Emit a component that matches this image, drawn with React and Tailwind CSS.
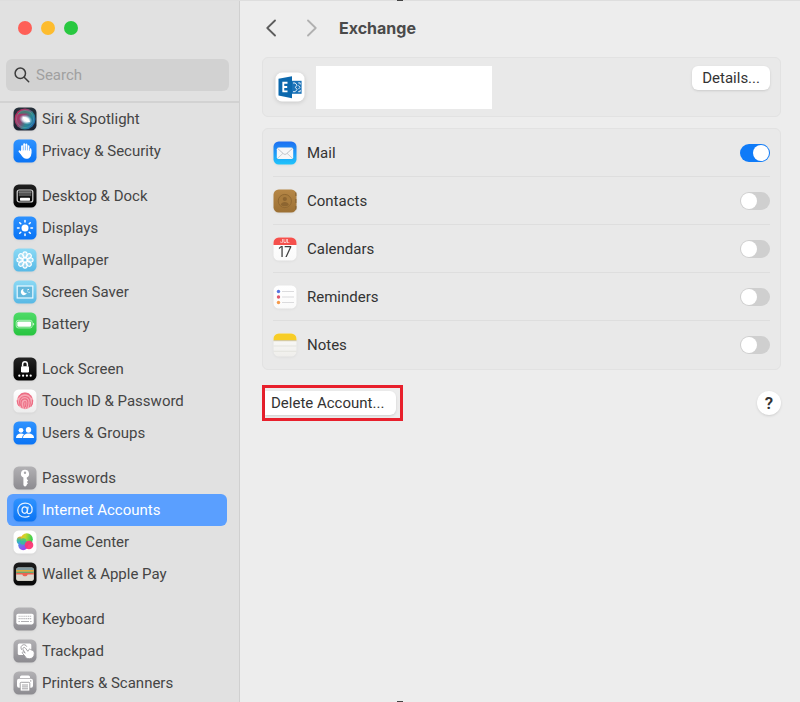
import React, { useId, useState } from 'react';

const Tile = ({ from, to, children }) => {
  const id = useId();
  return (
    <svg viewBox="0 0 24 24" className="size-6 shrink-0 drop-shadow-xs" aria-hidden="true">
      <defs>
        <linearGradient id={id} x1="0" y1="0" x2="0" y2="1">
          <stop offset="0" stopColor={from} />
          <stop offset="1" stopColor={to} />
        </linearGradient>
      </defs>
      <rect x="0.5" y="0.5" width="23" height="23" rx="5.2" fill={`url(#${id})`} />
      {children}
    </svg>
  );
};

const SiriIcon = () => (
  <Tile from="#26303a" to="#1b2433">
    <defs>
      <linearGradient id="siriRing" x1="0" y1="0.2" x2="1" y2="0.8">
        <stop offset="0" stopColor="#d8255f" />
        <stop offset="0.4" stopColor="#a8487a" />
        <stop offset="0.65" stopColor="#2c9aa4" />
        <stop offset="1" stopColor="#1f6cc8" />
      </linearGradient>
      <radialGradient id="siriGlow">
        <stop offset="0" stopColor="#ffffff" />
        <stop offset="0.5" stopColor="#f1f6ff" stopOpacity="0.85" />
        <stop offset="1" stopColor="#8fd3e6" stopOpacity="0" />
      </radialGradient>
    </defs>
    <circle cx="12" cy="12" r="10.500" fill="url(#siriRing)" opacity="0.85" />
    <path d="M4 7.5C8 2 16 2 20 8c-4-1.800-10-2-16-.5z" fill="#2f8f7a" opacity="0.75" />
    <circle cx="12" cy="12" r="8.600" fill="none" stroke="#7cc4b8" strokeWidth="0.6" opacity="0.5" />
    <ellipse cx="12.800" cy="12.600" rx="7" ry="4.800" fill="url(#siriGlow)" transform="rotate(20 12.800 12.600)" />
    <path d="M9.500 9.500c3 .2 7 2.500 7.500 5.500-3.500.5-7-1.500-7.500-5.500z" fill="#fff" />
  </Tile>
);

const HandIcon = () => (
  <Tile from="#2f93ff" to="#0a74f5">
    <g stroke="#fff" strokeWidth="1.9" strokeLinecap="round" fill="none">
      <path d="M9.1 13V7.2M11.2 12V5.2M13.4 12V5.5M15.5 13V7.3" />
      <path d="M8.9 15.2 6.5 12.3M17.4 14v-3.7" />
    </g>
    <path d="M8.1 11h10.2v3.4c0 3.2-1.9 5.3-4.9 5.3-2.3 0-3.6-1-4.8-3.1L7 13.500z" fill="#fff" />
    <path d="M10.15 7.5v4M12.3 6.500v5M14.45 7v4.500M16.5 9v3" stroke="#3a92fb" strokeWidth="0.45" />
  </Tile>
);

const DockIcon = () => (
  <Tile from="#202020" to="#000000">
    <rect x="4.2" y="6" width="15.600" height="12" rx="2" fill="none" stroke="#d8d8d8" strokeWidth="1.200" />
    <rect x="5.8" y="7.600" width="12.400" height="4.500" fill="#555" />
    <path d="M5.500 8h13" stroke="#aaa" strokeWidth="0.800" />
    <rect x="7" y="13.800" width="10" height="2.900" rx="0.600" fill="#fff" />
  </Tile>
);

const DisplaysIcon = () => (
  <Tile from="#2c91ff" to="#0873f5">
    <circle cx="12" cy="12" r="3.500" fill="#fff" />
    <path
      d="M12 4.500v1.600M12 17.900v1.600M4.500 12h1.600M17.900 12h1.600M6.700 6.700l1.100 1.100M16.200 16.200l1.100 1.100M6.700 17.300l1.100-1.100M16.200 7.800l1.100-1.100"
      stroke="#fff"
      strokeWidth="1.500"
      strokeLinecap="round"
    />
  </Tile>
);

const WallpaperIcon = () => (
  <Tile from="#8bdaf5" to="#58b9e6">
    {[0, 45, 90, 135, 180, 225, 270, 315].map((angle) => (
      <ellipse
        key={angle}
        cx="12"
        cy="6.800"
        rx="2.200"
        ry="2.900"
        transform={`rotate(${angle} 12 12)`}
        fill="#fff"
        fillOpacity="0.300"
        stroke="#fff"
        strokeWidth="1.100"
      />
    ))}
    <circle cx="12" cy="12" r="2" fill="#7bcdf0" stroke="#fff" strokeWidth="1" />
  </Tile>
);

const ScreenSaverIcon = () => (
  <Tile from="#8bd9f4" to="#58b8e4">
    <rect x="4.200" y="6" width="15.600" height="12" fill="#64b8dc" stroke="#e8f8ff" strokeWidth="1.200" />
    <path d="M10.500 8.800a3.200 3.200 0 1 0 3.500 4.300 3 3 0 0 1-3.500-4.300z" fill="#fff" />
    <path d="M14.500 9.500h1.500M15.500 12.300h1.200M14.300 11h.8" stroke="#fff" strokeWidth="0.900" />
  </Tile>
);

const BatteryIcon = () => (
  <Tile from="#4edb68" to="#27c43f">
    <rect x="3.200" y="8.300" width="16" height="7.600" rx="2" fill="none" stroke="#b9f3c2" strokeWidth="0.900" />
    <rect x="4.300" y="9.400" width="13.800" height="5.400" rx="1.200" fill="#fff" />
    <path d="M20.300 10.700c1.200.4 1.200 2.400 0 2.800z" fill="#fff" />
  </Tile>
);

const LockIcon = () => (
  <Tile from="#242424" to="#000000">
    <path d="M9.600 9.500V7.300a2.400 2.600 0 0 1 4.800 0v2.200" fill="none" stroke="#fff" strokeWidth="1.500" />
    <rect x="8" y="9.200" width="8" height="6.300" rx="1.200" fill="#fff" />
    <g fill="#fff">
      <circle cx="6.300" cy="18.700" r="1.100" />
      <circle cx="10.100" cy="18.700" r="1.100" />
      <circle cx="13.900" cy="18.700" r="1.100" />
      <circle cx="17.700" cy="18.700" r="1.100" />
    </g>
  </Tile>
);

const TouchIdIcon = () => (
  <Tile from="#ffffff" to="#ededed">
    <circle cx="12" cy="12" r="8.300" fill="#f7a9b5" />
    <g fill="none" stroke="#ec6d84" strokeWidth="1.100" strokeLinecap="round">
      <path d="M5.500 8.300a7.600 7.600 0 0 1 13 0M4.300 11.500c0 2 .3 3.500 1.200 4.800M19.600 11c.2 2.500-.3 4.600-1.500 6.200" />
      <path d="M7 16.500c-1.500-5 .4-9 5-9s6.300 4.500 4.500 10.200M9 18.500c-1.500-3-1.800-8.600 3-8.600 3.800 0 3.300 5.200 1.700 9.200" />
      <path d="M11.500 19c-1-2.500-1.300-6.500.5-6.500 1.700 0 .6 3.500.5 5M8 5.200c2.500-1.500 5.500-1.500 8 0" />
    </g>
  </Tile>
);

const UsersIcon = () => (
  <Tile from="#2f93ff" to="#0a74f5">
    <g fill="#fff">
      <circle cx="8" cy="9.300" r="2.400" />
      <path d="M3 17c0-2.900 2-4.500 5-4.500 1.300 0 2.300.3 3 .8-1.100.9-1.700 2.100-1.800 3.700z" />
      <ellipse cx="15.500" cy="8.800" rx="2.700" ry="2.900" />
      <path d="M10 17c0-3 2.200-4.600 5.500-4.600S21 14 21 17z" />
    </g>
  </Tile>
);

const KeyIcon = () => (
  <Tile from="#b2b1b4" to="#8c8b90">
    <path
      fillRule="evenodd"
      d="M12 3.800a4 4 0 0 1 1.800 7.600v1.500l1.400 1.500-1.400 1.500 1.200 1.400-1.200 1.300v.7L12 20.800l-1.600-1.600v-7.700A4 4 0 0 1 12 3.800zm0 1.800a1.200 1.200 0 1 0 0 2.400 1.200 1.200 0 0 0 0-2.400z"
      fill="#fff"
    />
  </Tile>
);

const AtIcon = () => (
  <Tile from="#2e93ff" to="#0a73f3">
    <g fill="none" stroke="#e5f2ff" strokeWidth="1.250" strokeLinecap="round">
      <ellipse cx="11.700" cy="12.100" rx="2.700" ry="3.200" />
      <path d="M15 9.200l-.7 4.400c-.2 1.500.5 2 1.400 2 1.900 0 3.400-1.700 3.400-4.100 0-3.900-2.900-6.400-6.900-6.400-4.300 0-7.400 3-7.400 7.100 0 4.200 2.900 6.900 7.300 6.900 1.600 0 2.800-.3 3.900-.9" />
    </g>
  </Tile>
);

const GameCenterIcon = () => (
  <Tile from="#ffffff" to="#fdfdfd">
    <defs>
      <linearGradient id="gcTop" x1="0" y1="0" x2="1" y2="0.200">
        <stop offset="0" stopColor="#ffb11c" />
        <stop offset="0.400" stopColor="#c8d92c" />
        <stop offset="1" stopColor="#35cf52" />
      </linearGradient>
      <linearGradient id="gcLeft" x1="0" y1="0" x2="0" y2="1">
        <stop offset="0" stopColor="#f3a52a" />
        <stop offset="0.400" stopColor="#4bbf8e" />
        <stop offset="1" stopColor="#28a4ec" />
      </linearGradient>
      <linearGradient id="gcBottom" x1="0" y1="0" x2="0.600" y2="1">
        <stop offset="0" stopColor="#2fb0e8" />
        <stop offset="1" stopColor="#a33df0" />
      </linearGradient>
    </defs>
    <circle cx="7.700" cy="10.500" r="4" fill="url(#gcLeft)" />
    <circle cx="13.800" cy="9.200" r="6" fill="url(#gcTop)" />
    <circle cx="10.200" cy="15.300" r="4.900" fill="url(#gcBottom)" />
    <circle cx="10.200" cy="11.500" r="3.200" fill="#38c48c" opacity="0.800" />
    <circle cx="16" cy="15" r="4.300" fill="#fc3474" opacity="0.940" />
  </Tile>
);

const WalletIcon = () => (
  <Tile from="#1c1c1c" to="#080808">
    <rect x="3.300" y="5.500" width="17.400" height="13.300" rx="2" fill="#dcd9d0" />
    <path d="M3.300 7.500a2 2 0 0 1 2-2h13.400a2 2 0 0 1 2 2v1H3.300z" fill="#829aa0" />
    <path d="M3.300 8h17.400v1.800H3.300z" fill="#dfac38" />
    <path d="M3.300 9.600h17.400v1.600H3.300z" fill="#6fa769" />
    <path d="M3.300 11h17.400v2H15.500c-.4 1.700-1.800 2.700-3.500 2.700s-3.100-1-3.500-2.700H3.300z" fill="#ec6451" />
    <path d="M3.300 12.400h6c.4 1.300 1.400 1.800 2.700 1.800s2.300-.5 2.700-1.800h6v4.400a2 2 0 0 1-2 2H5.300a2 2 0 0 1-2-2z" fill="#dcd9d0" />
  </Tile>
);

const KeyboardIcon = () => (
  <Tile from="#b2b1b4" to="#8c8b90">
    <rect x="3.300" y="6.800" width="17.400" height="10.600" rx="1.800" fill="#fff" />
    <path d="M5.500 9.300h13M5.500 11.600h13" stroke="#b9b8bb" strokeWidth="1.100" strokeDasharray="1.300 0.600" />
    <path d="M5.500 14.500h1.300M8 14.500h8M17.200 14.500h1.300" stroke="#b0afb2" strokeWidth="1.100" />
  </Tile>
);

const TrackpadIcon = () => (
  <Tile from="#b2b1b4" to="#8c8b90">
    <rect x="4.800" y="4.500" width="13.500" height="11.500" rx="1.500" fill="#fff" />
    <path
      d="M10.300 8.800c1-.9 2 0 2.500.8l2 2.700 1-1.700c.5-.8 1.600-.5 2 .1l1.500.5c1.300.5 2 1.800 2 3.300 0 3.200-2 5.200-5 5.200-2.400 0-3.600-.9-4.500-2.700l-2.300-2.700c-.8-1.200.6-2 1.700-1l1 .9-2.100-3.600c-.4-.7-.3-1.400.2-1.800z"
      fill="#fff"
      stroke="#98979b"
      strokeWidth="0.900"
    />
    <path d="M9.300 11.200a3 3 0 1 1 4.500-3.500" fill="none" stroke="#98979b" strokeWidth="0.900" />
  </Tile>
);

const PrinterIcon = () => (
  <Tile from="#b2b1b4" to="#8c8b90">
    <path d="M7 7V6a1.500 1.500 0 0 1 1.500-1.500h7A1.500 1.500 0 0 1 17 6v1z" fill="#fff" />
    <rect x="4" y="7.800" width="16" height="9" rx="2" fill="#fff" />
    <rect x="7.200" y="11.300" width="9.600" height="8.700" rx="1" fill="#fff" stroke="#97969a" strokeWidth="0.900" />
    <path d="M9 14h6M9 15.900h6M9 17.800h6" stroke="#97969a" strokeWidth="0.900" />
    <circle cx="17.700" cy="9.900" r="0.700" fill="#97969a" />
  </Tile>
);

const ExchangeIcon = () => (
  <svg viewBox="0 0 30 30" className="size-[30px] shrink-0 drop-shadow-sm" aria-hidden="true">
    <rect x="0.500" y="0.500" width="29" height="29" rx="6.500" fill="#fff" />
    <rect x="15" y="8.800" width="11.600" height="13" fill="#1a72b8" />
    <path
      d="M18 11h2.200l1.800 2.200-1.600 2.100 1.600 2.200-1.800 2.200H18M25.200 12.500v-1.600h-2M25.200 18v1.700h-2M23.500 13.500l1.500 1.800-1.500 1.800"
      fill="none"
      stroke="#e2eef8"
      strokeWidth="1"
    />
    <path d="M3.500 6.800 17 4.200v22L3.500 23.600z" fill="#0b68ad" />
    <path d="M12.500 10.700H8.300v8.700h4.200M8.300 15h3.900" fill="none" stroke="#fff" strokeWidth="1.900" />
  </svg>
);

const MailIcon = () => (
  <Tile from="#1e6ff2" to="#1fc4fb">
    <rect x="3.800" y="6.500" width="16.400" height="11.500" rx="1.800" fill="#f7f7f8" />
    <path d="M4.500 17.300l5.500-5M19.500 17.300l-5.500-5" stroke="#c3c6ca" strokeWidth="0.800" />
    <path d="M4.300 7.200l6 5.400c1.200 1 2.200 1 3.400 0l6-5.400" fill="none" stroke="#b9bcc1" strokeWidth="0.900" />
  </Tile>
);

const ContactsIcon = () => (
  <Tile from="#b68746" to="#9c7034">
    <path d="M22.800 3.500v3.600M22.800 10v4M22.800 17v3.500" stroke="#876536" strokeWidth="1.200" />
    <circle cx="11.800" cy="12" r="6.600" fill="#a97c3d" stroke="#8d6530" strokeWidth="0.900" />
    <circle cx="11.800" cy="10" r="2.100" fill="#8d6530" />
    <path d="M7.700 15.800c.7-2 2.100-2.800 4.100-2.800s3.400.8 4.100 2.800c-2.300 2-5.900 2-8.200 0z" fill="#8d6530" />
  </Tile>
);

const CalendarIcon = () => (
  <Tile from="#ffffff" to="#fafafa">
    <path d="M.5 8V5.700A5.200 5.200 0 0 1 5.700.5h12.600a5.200 5.200 0 0 1 5.200 5.200V8z" fill="#f5504c" />
    <text x="12" y="6.300" textAnchor="middle" fontSize="5" fontWeight="600" fill="#ffe3e2" fontFamily="Inter, sans-serif">JUL</text>
    <text x="12" y="20" textAnchor="middle" fontSize="14" fill="#3f3f3f" fontFamily="Inter, sans-serif">17</text>
  </Tile>
);

const RemindersIcon = () => (
  <Tile from="#ffffff" to="#fafafa">
    <path d="M9 6.500h12M9 12h12M9 17.500h12" stroke="#d7d7d9" strokeWidth="0.900" />
    <circle cx="5.500" cy="6.500" r="1.700" fill="#5673e0" />
    <circle cx="5.500" cy="12" r="1.700" fill="#e0566a" />
    <circle cx="5.500" cy="17.500" r="1.700" fill="#f59a4b" />
  </Tile>
);

const NotesIcon = () => (
  <Tile from="#fbfbfa" to="#efeeeb">
    <path d="M.5 7.200V5.700A5.200 5.200 0 0 1 5.700.5h12.600a5.200 5.200 0 0 1 5.200 5.200v1.500z" fill="#f7cd27" />
    <path d="M.5 7.700h23" stroke="#c9bd92" strokeWidth="0.900" />
    <path d="M.5 13h23M.5 18.300h23" stroke="#dddcd9" strokeWidth="0.700" />
  </Tile>
);

const groups = [
  [
    { name: 'Siri & Spotlight', Icon: SiriIcon },
    { name: 'Privacy & Security', Icon: HandIcon },
  ],
  [
    { name: 'Desktop & Dock', Icon: DockIcon },
    { name: 'Displays', Icon: DisplaysIcon },
    { name: 'Wallpaper', Icon: WallpaperIcon },
    { name: 'Screen Saver', Icon: ScreenSaverIcon },
    { name: 'Battery', Icon: BatteryIcon },
  ],
  [
    { name: 'Lock Screen', Icon: LockIcon },
    { name: 'Touch ID & Password', Icon: TouchIdIcon },
    { name: 'Users & Groups', Icon: UsersIcon },
  ],
  [
    { name: 'Passwords', Icon: KeyIcon },
    { name: 'Internet Accounts', Icon: AtIcon },
    { name: 'Game Center', Icon: GameCenterIcon },
    { name: 'Wallet & Apple Pay', Icon: WalletIcon },
  ],
  [
    { name: 'Keyboard', Icon: KeyboardIcon },
    { name: 'Trackpad', Icon: TrackpadIcon },
    { name: 'Printers & Scanners', Icon: PrinterIcon },
  ],
];

const services = [
  { name: 'Mail', Icon: MailIcon, on: true },
  { name: 'Contacts', Icon: ContactsIcon },
  { name: 'Calendars', Icon: CalendarIcon },
  { name: 'Reminders', Icon: RemindersIcon },
  { name: 'Notes', Icon: NotesIcon },
];

const Sidebar = () => {
  const [active, setActive] = useState('Internet Accounts');

  return (
    <aside className="w-60 shrink-0 bg-[#e1e1e1] border-r border-[#d0d0d0]">
      <div className="border-b-2 border-[#d2d2d2] pl-1.5 pr-2.5 pb-2.5">
        {/* Window buttons */}
        <div className="flex gap-[9px] pl-3 pt-5 pb-6">
          <span className="size-3.5 rounded-full bg-[#fe5f57]"></span>
          <span className="size-3.5 rounded-full bg-[#fdbc2e]"></span>
          <span className="size-3.5 rounded-full bg-[#28c840]"></span>
        </div>

        {/* Search */}
        <label className="flex items-center gap-1.5 h-8 px-2 rounded-md bg-[#d2d2d2]">
          <svg viewBox="0 0 16 16" className="size-4 shrink-0" fill="none" stroke="#3c3c3c" strokeWidth="1.500" strokeLinecap="round" aria-hidden="true">
            <circle cx="6.300" cy="6.300" r="5.200" />
            <path d="M10.200 10.200l4.500 4.500" />
          </svg>
          <input type="text" placeholder="Search" aria-label="Search" className="min-w-0 flex-1 bg-transparent outline-none placeholder:text-[#a0a0a0]" />
        </label>
      </div>

      <nav className="flex flex-col gap-[13px] pl-[7px] pr-3">
        {groups.map((items) => (
          <ul key={items[0].name}>
            {items.map(({ name, Icon }) => (
              <li key={name}>
                <a
                  href="#"
                  onClick={() => setActive(name)}
                  className={`flex items-center gap-[5px] h-8 px-1.5 rounded-md ${name === active ? 'bg-[#5a9fff] text-white' : 'text-[#454545]'}`}
                >
                  <Icon />
                  <span>{name}</span>
                </a>
              </li>
            ))}
          </ul>
        ))}
      </nav>
    </aside>
  );
};

const ServiceRow = ({ name, Icon, on }) => (
  <li className="h-12 border-b border-[#dedede] last:border-b-0">
    <label className="flex items-center gap-2.5 h-full">
      <Icon />
      <span className="flex-1">{name}</span>
      <input
        type="checkbox"
        role="switch"
        defaultChecked={on}
        className="appearance-none flex w-[30px] h-[18px] p-px rounded-full bg-[#cfcfcf] checked:bg-[#0f7bf8] before:size-4 before:rounded-full before:bg-white checked:before:ml-3"
      />
    </label>
  </li>
);

const App = () => {
  return (
    <div className="relative flex min-h-screen bg-[#ededed] border-t border-[#dedede] font-[Roboto,sans-serif] text-[15px] leading-5 text-[#333333]">
      {/* Resize handles */}
      <span className="absolute -top-px left-1/2 -translate-x-1/2 w-1.5 h-px bg-[#444444]"></span>
      <span className="absolute bottom-0 left-1/2 -translate-x-1/2 w-1.5 h-px bg-[#444444]"></span>

      <Sidebar />

      <main className="flex-1 min-w-0 pl-[22px] pr-[19px]">
        {/* Title bar */}
        <header className="flex items-center h-[54px] mb-0.5">
          <button type="button" aria-label="Back" className="w-[41px] flex pl-1">
            <svg viewBox="0 0 10 18" className="w-2.5 h-[18px]" fill="none" stroke="#5c5c5c" strokeWidth="1.800" strokeLinecap="round" strokeLinejoin="round">
              <path d="M9 1.500 1.300 9 9 16.500" />
            </svg>
          </button>
          <button type="button" aria-label="Forward" className="w-9 flex pl-1">
            <svg viewBox="0 0 10 18" className="w-2.5 h-[18px]" fill="none" stroke="#b0b0b0" strokeWidth="1.800" strokeLinecap="round" strokeLinejoin="round">
              <path d="M1 1.500 8.700 9 1 16.500" />
            </svg>
          </button>
          <h1 className="font-[Inter,sans-serif] text-base font-bold text-[#4a4a4a]">Exchange</h1>
        </header>

        {/* Account */}
        <section className="flex items-start pl-3 pr-2.5 py-2 rounded-md border border-[#e2e2e2] bg-[#e9e9e9]">
          <div className="flex items-center gap-[11px] flex-1 h-[42px]">
            <ExchangeIcon />
            <div className="w-44 h-[43px] bg-white"></div>
          </div>
          <button type="button" className="h-6 px-2.5 rounded-md bg-white shadow-sm">Details...</button>
        </section>

        {/* Services */}
        <ul className="mt-[11px] px-2.5 rounded-md border border-[#e2e2e2] bg-[#e9e9e9]">
          {services.map((service) => (
            <ServiceRow key={service.name} {...service} />
          ))}
        </ul>

        <div className="flex items-center justify-between mt-[15px]">
          <div className="border-3 border-[#e8202c] py-[3px] pr-1">
            <button type="button" className="h-6 pl-1.5 pr-3 rounded-r-md bg-white shadow-sm">Delete Account...</button>
          </div>
          <button type="button" aria-label="Help" className="size-6 rounded-full bg-white shadow-sm text-[17px] font-semibold">?</button>
        </div>
      </main>
    </div>
  );
};

export default App;
